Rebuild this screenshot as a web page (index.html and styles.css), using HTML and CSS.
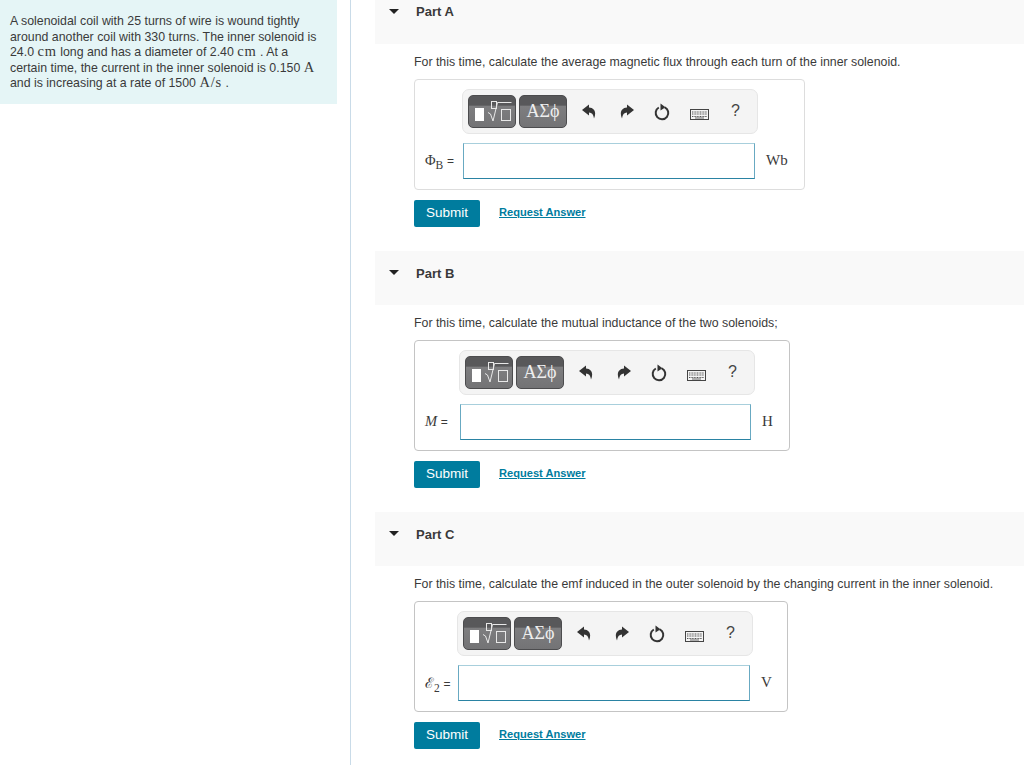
FILE: index.html
```html
<!DOCTYPE html>
<html lang="en">
<head>
    <meta charset="UTF-8">
    <title>Solenoid Problem</title>
    <link rel="stylesheet" href="styles.css">
</head>
<body>
    <svg class="icon-defs" width="0" height="0">
        <symbol id="icon-templates" viewBox="0 0 48 33">
            <rect x="7" y="13" width="9" height="13" fill="#fff"/>
            <rect x="23.500" y="6.500" width="5" height="7" fill="none" stroke="#e8e8e8"/>
            <path d="M20 17.500l2.500 1.500 2.500 7 4.500-18.500h14" fill="none" stroke="#e8e8e8"/>
            <rect x="33.500" y="14.500" width="9" height="11" fill="none" stroke="#e8e8e8"/>
        </symbol>
        <symbol id="icon-undo" viewBox="0 0 14 15">
            <path d="M7 0.500L0 6L7 11.500V8.500C10 8.500 11.500 10.500 12 14.500C14.500 9 13 3.800 7 3.500Z" fill="#333"/>
        </symbol>
        <symbol id="icon-redo" viewBox="0 0 14 15">
            <path d="M7 0.500L14 6L7 11.500V8.500C4 8.500 2.500 10.500 2 14.500C-0.500 9 1 3.800 7 3.500Z" fill="#333"/>
        </symbol>
        <symbol id="icon-reset" viewBox="0 0 16 18">
            <path d="M10.800 4.300A6.300 6.300 0 1 1 4.800 4.500" fill="none" stroke="#333" stroke-width="2"/>
            <path d="M6.500 0.500L11.500 4.300L6.500 7.500Z" fill="#333"/>
        </symbol>
        <symbol id="icon-keyboard" viewBox="0 0 19 11">
            <rect x="0.500" y="0.500" width="18" height="10" fill="#f4f4f4" stroke="#444"/>
            <path d="M2 3h15M2 5h15" stroke="#555" stroke-width="1" stroke-dasharray="1 .6"/>
            <path d="M2 7.500h15" stroke="#555" stroke-width="1.200" stroke-dasharray="1 .6"/>
            <path d="M5 9h9" stroke="#666"/>
        </symbol>
    </svg>

    <div class="page">
        <aside class="sidebar">
            <div class="intro">
                A solenoidal coil with 25 turns of wire is wound tightly around another coil with 330 turns. The inner solenoid is 24.0 <span class="math">cm</span> long and has a diameter of 2.40 <span class="math">cm</span> . At a certain time, the current in the inner solenoid is 0.150 <span class="math">A</span> and is increasing at a rate of 1500 <span class="math">A/s</span> .
            </div>
        </aside>

        <main class="parts">
            <section class="part">
                <div class="part-header part-header-first"><span class="caret"></span><h2>Part A</h2></div>
                <p class="question">For this time, calculate the average magnetic flux through each turn of the inner solenoid.</p>
                <div class="answer-box box-a">
                    <div class="toolbar">
                        <div class="tool-btn"><svg width="48" height="33"><use href="#icon-templates"/></svg></div>
                        <div class="tool-btn tool-symbols">ΑΣϕ</div>
                        <svg class="icon icon-undo" width="14" height="15"><use href="#icon-undo"/></svg>
                        <svg class="icon icon-redo" width="14" height="15"><use href="#icon-redo"/></svg>
                        <svg class="icon" width="16" height="18"><use href="#icon-reset"/></svg>
                        <svg class="icon icon-keyboard" width="19" height="11"><use href="#icon-keyboard"/></svg>
                        <span class="help">?</span>
                    </div>
                    <label class="var">Φ<sub>B</sub> <span class="eq">=</span></label>
                    <input class="answer" type="text">
                    <span class="unit">Wb</span>
                </div>
                <div class="actions"><button class="submit">Submit</button><a class="request" href="#">Request Answer</a></div>
            </section>

            <section class="part">
                <div class="part-header"><span class="caret"></span><h2>Part B</h2></div>
                <p class="question">For this time, calculate the mutual inductance of the two solenoids;</p>
                <div class="answer-box box-b">
                    <div class="toolbar">
                        <div class="tool-btn"><svg width="48" height="33"><use href="#icon-templates"/></svg></div>
                        <div class="tool-btn tool-symbols">ΑΣϕ</div>
                        <svg class="icon icon-undo" width="14" height="15"><use href="#icon-undo"/></svg>
                        <svg class="icon icon-redo" width="14" height="15"><use href="#icon-redo"/></svg>
                        <svg class="icon" width="16" height="18"><use href="#icon-reset"/></svg>
                        <svg class="icon icon-keyboard" width="19" height="11"><use href="#icon-keyboard"/></svg>
                        <span class="help">?</span>
                    </div>
                    <label class="var"><i>M</i> <span class="eq">=</span></label>
                    <input class="answer" type="text">
                    <span class="unit">H</span>
                </div>
                <div class="actions"><button class="submit">Submit</button><a class="request" href="#">Request Answer</a></div>
            </section>

            <section class="part">
                <div class="part-header"><span class="caret"></span><h2>Part C</h2></div>
                <p class="question">For this time, calculate the emf induced in the outer solenoid by the changing current in the inner solenoid.</p>
                <div class="answer-box box-c">
                    <div class="toolbar">
                        <div class="tool-btn"><svg width="48" height="33"><use href="#icon-templates"/></svg></div>
                        <div class="tool-btn tool-symbols">ΑΣϕ</div>
                        <svg class="icon icon-undo" width="14" height="15"><use href="#icon-undo"/></svg>
                        <svg class="icon icon-redo" width="14" height="15"><use href="#icon-redo"/></svg>
                        <svg class="icon" width="16" height="18"><use href="#icon-reset"/></svg>
                        <svg class="icon icon-keyboard" width="19" height="11"><use href="#icon-keyboard"/></svg>
                        <span class="help">?</span>
                    </div>
                    <label class="var">ℰ<sub>2</sub> <span class="eq">=</span></label>
                    <input class="answer" type="text">
                    <span class="unit">V</span>
                </div>
                <div class="actions"><button class="submit">Submit</button><a class="request" href="#">Request Answer</a></div>
            </section>
        </main>
    </div>
</body>
</html>
```

FILE: styles.css
```css
html, body {
    margin: 0;
    height: 765px;
    overflow: hidden;
}
body {
    font-family: "Liberation Sans", Arial, sans-serif;
    font-size: 12.35px;
    color: #3a3a3a;
    background-color: #fff;
}
.icon-defs {
    position: absolute;
}
.page {
    display: flex;
    height: 765px;
}
.sidebar {
    width: 350px;
    flex-shrink: 0;
    border-right: 1px solid #c9dbe8;
}
.intro {
    width: 310px;
    height: 90px;
    padding: 14px 17px 0 10px;
    line-height: 15.5px;
    background-color: #e5f5f6;
}
.math {
    font-family: "Liberation Serif", serif;
    font-size: 14.5px;
    letter-spacing: 0.8px;
    line-height: 0;
}
.parts {
    flex: 1;
    padding-left: 24px;
}
.part {
    margin-bottom: 24px;
}
.part-header {
    display: flex;
    align-items: flex-start;
    height: 54px;
    padding-top: 15px;
    box-sizing: border-box;
    background-color: #f9f9f9;
}
.part-header-first {
    height: 44px;
    padding-top: 4px;
}
.caret {
    width: 0;
    height: 0;
    margin: 4px 0 0 14px;
    border-left: 5px solid transparent;
    border-right: 5px solid transparent;
    border-top: 5px solid #222;
}
.part-header-first .caret {
    margin-top: 5px;
}
.part-header h2 {
    margin: 0 0 0 17px;
    font-size: 13px;
    line-height: 16px;
    font-weight: bold;
}
.question {
    margin: 10px 0 8px 39px;
    line-height: 17px;
}
.answer-box {
    display: grid;
    grid-template-rows: 45px 36px;
    row-gap: 9px;
    justify-content: start;
    align-items: center;
    height: 111px;
    box-sizing: border-box;
    margin-left: 39px;
    padding: 9px 0 0 10px;
    border: 1px solid #c4c4c4;
    border-radius: 4px;
}
.box-a {
    width: 391px;
    grid-template-columns: 38px 292px auto;
    border-color: #ddd;
}
.box-b {
    width: 376px;
    grid-template-columns: 35px 291px auto;
}
.box-c {
    width: 374px;
    grid-template-columns: 33px 292px auto;
}
.toolbar {
    grid-column: 2;
    grid-row: 1;
    display: flex;
    align-items: center;
    width: 296px;
    height: 45px;
    box-sizing: border-box;
    margin-left: -1px;
    padding: 0 0 0 5px;
    background-color: #f4f4f4;
    border: 1px solid #e6e6e6;
    border-radius: 7px;
}
.tool-btn {
    width: 48px;
    height: 33px;
    margin-right: 3px;
    border-radius: 5px;
    box-sizing: border-box;
    border: 1px solid #4c4c4e;
    background: linear-gradient(#58585a 0, #58585a 30%, #7e7e80 32%, #737375 100%);
    overflow: hidden;
}
.tool-btn svg {
    display: block;
    margin: -1px;
}
.tool-symbols {
    color: #eee;
    font-family: "Liberation Serif", serif;
    font-size: 18px;
    line-height: 31px;
    text-align: center;
}
.icon {
    flex-shrink: 0;
    margin-left: 20px;
}
.icon-undo {
    margin-left: 12px;
}
.icon-redo {
    margin-left: 24px;
}
.icon-keyboard {
    margin-top: 5px;
}
.help {
    margin: 0 0 2px 22px;
    font-size: 16px;
    color: #444;
}
.var {
    grid-column: 1;
    grid-row: 2;
    margin-bottom: 2px;
    font-family: "Liberation Serif", serif;
    font-size: 14.5px;
    white-space: nowrap;
}
.var sub {
    font-size: 11.5px;
    line-height: 0;
}
.eq {
    font-family: "Liberation Sans", Arial, sans-serif;
    font-size: 12px;
}
.answer {
    grid-column: 2;
    grid-row: 2;
    width: 100%;
    height: 36px;
    box-sizing: border-box;
    padding: 0;
    background-color: #fff;
    border: 1px solid #68a9c2;
    border-top-color: #a8cfdc;
    border-bottom-color: #2a83a3;
}
.unit {
    grid-column: 3;
    grid-row: 2;
    margin-bottom: 2px;
    padding-left: 11px;
    font-family: "Liberation Serif", serif;
    font-size: 15px;
}
.actions {
    display: flex;
    align-items: center;
    margin: 10px 0 0 39px;
}
.submit {
    width: 66px;
    height: 27px;
    padding: 0 0 2px;
    color: #fff;
    font-family: "Liberation Sans", Arial, sans-serif;
    font-size: 13.5px;
    background-color: #007c9e;
    border: none;
    border-radius: 2px;
}
.request {
    margin: 0 0 3px 19px;
    color: #007c9e;
    font-size: 11.1px;
    font-weight: bold;
}
```
